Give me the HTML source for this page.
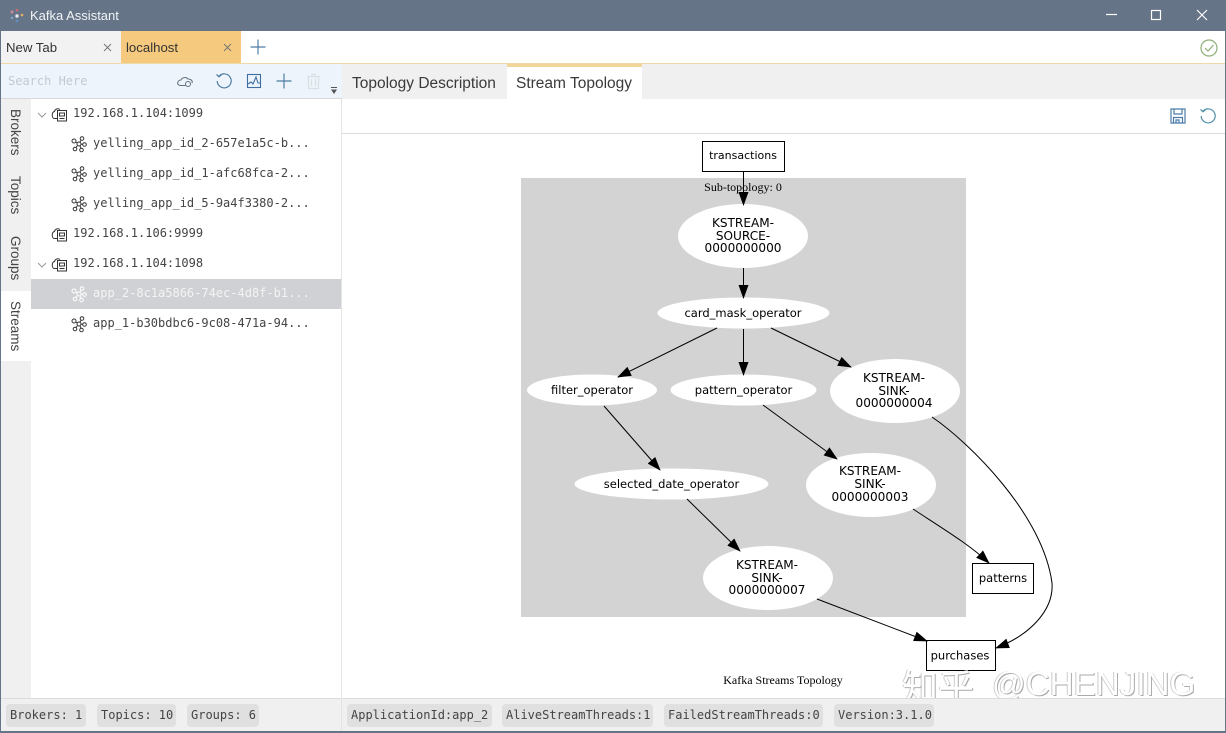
<!DOCTYPE html>
<html><head><meta charset="utf-8"><style>
*{box-sizing:border-box}
html,body{margin:0;padding:0;width:1226px;height:733px;overflow:hidden;background:#fff;font-family:"Liberation Sans","Noto Sans CJK SC",sans-serif;color:#333}
.a{position:absolute}
.m{font-family:"DejaVu Sans Mono","Liberation Mono",monospace;font-size:12px;white-space:pre;color:#444}
.row{position:absolute;left:31px;width:310px;height:30px;line-height:29px}
.vt{position:absolute;left:0;width:31px;writing-mode:vertical-rl;font-size:13.5px;color:#444;text-align:center;line-height:31px}
.chip{position:absolute;top:704px;height:23px;background:#e0e0e0;border-radius:4px;line-height:23px;padding-left:4px;font-family:"DejaVu Sans Mono","Liberation Mono",monospace;font-size:12px;color:#444;white-space:pre}
</style></head><body>
<div class="a" style="left:0;top:0;width:1226px;height:31px;background:#667487"></div>
<svg class="a" style="left:9px;top:8px" width="16" height="16"><circle cx="3" cy="4" r="1.500" fill="#c98a9a"/><circle cx="8" cy="2" r="1.300" fill="#d36a70"/><circle cx="8" cy="8" r="1.700" fill="#e8e8f0"/><circle cx="13" cy="7" r="1.300" fill="#e9b060"/><circle cx="3" cy="10" r="1.300" fill="#7fa0c8"/><circle cx="8" cy="13" r="1.500" fill="#5f8fc0"/></svg>
<div class="a" style="left:30px;top:7px;font-size:13px;line-height:17px;color:#f2f4f6">Kafka Assistant</div>
<svg class="a" style="left:1100px;top:5px" width="120" height="20" fill="none" stroke="#fff" stroke-width="1.200"><path d="M6 9.500H17"/><rect x="51.500" y="5.500" width="9" height="9"/><path d="M97 5l10 10M107 5L97 15"/></svg>

<div class="a" style="left:0;top:31px;width:121px;height:33px;background:#f2f2f2"></div>
<div class="a" style="left:6px;top:39px;font-size:13.200px;line-height:17px;color:#333">New Tab</div>
<svg class="a" style="left:102px;top:42px" width="11" height="11" stroke="#777" fill="none"><path d="M2 2l7 7M9 2l-7 7"/></svg>
<div class="a" style="left:121px;top:31px;width:120px;height:33px;background:#f5c97e"></div>
<div class="a" style="left:126px;top:39px;font-size:13.200px;line-height:17px;color:#333">localhost</div>
<svg class="a" style="left:222px;top:42px" width="11" height="11" stroke="#777" fill="none"><path d="M2 2l7 7M9 2l-7 7"/></svg>
<svg class="a" style="left:250px;top:39px" width="16" height="16" stroke="#4f7ea3" stroke-width="1.200" fill="none"><path d="M8 0.500V15.500M0.500 8H15.500"/></svg>
<svg class="a" style="left:1199px;top:38px" width="20" height="20" fill="none" stroke="#8fae78" stroke-width="1.200"><circle cx="10" cy="10" r="8"/><path d="M6 10l3 3 5.500-6"/></svg>
<div class="a" style="left:0;top:63px;width:1226px;height:1px;background:#f0d9a8"></div>

<div class="a" style="left:0;top:64px;width:342px;height:35px;background:#edf4fc;border-bottom:1px solid #d8d8d8"></div>
<div class="a m" style="left:8px;top:74px;color:#c4c9ce;line-height:15px">Search Here</div>
<svg class="a" style="left:176px;top:73px" width="20" height="16" fill="none" stroke="#63717f" stroke-width="1"><path d="M5 12.500C2 12.500 1 10.500 2 9 2.500 7.500 4 7 5 7 6 4.500 10 3.500 12 6 15 6 17 8 16 10"/><circle cx="12" cy="11" r="2.500"/><path d="M5 12.500H9.500"/></svg>
<svg class="a" style="left:214px;top:72px" width="20" height="18" fill="none" stroke="#4f7ea3" stroke-width="1.200"><path d="M5 4.200A7 7 0 1 1 3.200 9"/><path d="M2.500 2.500L5 4.800 7.500 2.500" /></svg>
<svg class="a" style="left:246px;top:73px" width="16" height="16" fill="none" stroke="#3f6f9f" stroke-width="1.100"><rect x="1.500" y="1.500" width="13" height="13"/><path d="M2 11l3-2 2 2 3-7 2 6 2 0"/></svg>
<svg class="a" style="left:276px;top:73px" width="16" height="16" stroke="#4f7ea3" stroke-width="1.200" fill="none"><path d="M8 0.500V15.500M0.500 8H15.500"/></svg>
<svg class="a" style="left:306px;top:73px" width="15" height="17" fill="none" stroke="#dcdfe2" stroke-width="1.200"><path d="M2.500 3.500h10v12h-10zM1 3.500h13M5 1.500h5M5.500 6v7M9.500 6v7"/></svg>
<svg class="a" style="left:330px;top:87px" width="8" height="8" fill="#555"><rect x="1" y="0" width="6" height="1"/><path d="M1 2.500h6L4 7z"/></svg>

<div class="a" style="left:342px;top:64px;width:884px;height:35px;background:#f0f0f0"></div>
<div class="a" style="left:507px;top:64px;width:135px;height:35px;background:#fff;border-top:3px solid #f2d598"></div>
<div class="a" style="left:352px;top:74px;font-size:15.500px;line-height:20px;color:#3a3a3a">Topology Description</div>
<div class="a" style="left:516px;top:74px;font-size:15.500px;line-height:20px;color:#3a3a3a">Stream Topology</div>
<div class="a" style="left:342px;top:133px;width:884px;height:1px;background:#dcdcdc"></div>
<svg class="a" style="left:1170px;top:108px" width="16" height="16" fill="none" stroke="#4b7cab" stroke-width="1.200"><path d="M1 1h14v14H1zM4 1v5h8V1M3.500 15V9.500h9V15M6 15v-3h3v3"/></svg>
<svg class="a" style="left:1198px;top:107px" width="20" height="18" fill="none" stroke="#4f8fa8" stroke-width="1.200"><path d="M5 4.200A7 7 0 1 1 3.200 9"/><path d="M2.500 2.500L5 4.800 7.500 2.500"/></svg>

<div class="a" style="left:0;top:99px;width:31px;height:599px;background:#f0f0f0"></div>
<div class="a" style="left:0;top:291px;width:31px;height:70px;background:#fff"></div>
<div class="vt" style="top:109px">Brokers</div>
<div class="vt" style="top:176px">Topics</div>
<div class="vt" style="top:236px">Groups</div>
<div class="vt" style="top:301px">Streams</div>
<div class="a" style="left:341px;top:99px;width:1px;height:599px;background:#e4e4e4"></div>

<div class="row" style="top:279px;background:#cfd1d4"></div>

<svg width="0" height="0" style="position:absolute"><defs>
<g id="srv" fill="none" stroke="#333" stroke-width="1"><path d="M7 12.500H3.500C0.500 12.500 0.500 6 3.500 5.500 4 3 7 2 9 3.500"/><rect x="6.500" y="4.500" width="9" height="10.500" fill="#fff"/><path d="M8.500 7h5v3h-5zM8.500 12.500h5"/></g>
<g id="app" fill="none" stroke="#333" stroke-width="1"><circle cx="8" cy="8" r="2"/><circle cx="3" cy="5" r="2"/><circle cx="4" cy="13" r="1.800"/><circle cx="11" cy="2.500" r="1.800"/><circle cx="13.500" cy="8.500" r="1.800"/><circle cx="10.500" cy="14" r="1.800"/><path d="M5 6l1.500 1M6.500 9.500L5 11.500M9 6l1.200-2M10 8.200h1.700M9 10l1 2.200"/></g>
<g id="appw" fill="none" stroke="#fff" stroke-width="1"><circle cx="8" cy="8" r="2"/><circle cx="3" cy="5" r="2"/><circle cx="4" cy="13" r="1.800"/><circle cx="11" cy="2.500" r="1.800"/><circle cx="13.500" cy="8.500" r="1.800"/><circle cx="10.500" cy="14" r="1.800"/><path d="M5 6l1.500 1M6.500 9.500L5 11.500M9 6l1.200-2M10 8.200h1.700M9 10l1 2.200"/></g>
</defs></svg>
<svg class="a" style="left:35px;top:108px" width="14" height="14" fill="none" stroke="#999"><path d="M3 5l4 4 4-4"/></svg>
<svg class="a" style="left:35px;top:258px" width="14" height="14" fill="none" stroke="#999"><path d="M3 5l4 4 4-4"/></svg>
<svg class="a" style="left:51px;top:106px" width="17" height="17"><use href="#srv"/></svg>
<svg class="a" style="left:51px;top:226px" width="17" height="17"><use href="#srv"/></svg>
<svg class="a" style="left:51px;top:256px" width="17" height="17"><use href="#srv"/></svg>
<svg class="a" style="left:71px;top:136px" width="17" height="17"><use href="#app"/></svg>
<svg class="a" style="left:71px;top:166px" width="17" height="17"><use href="#app"/></svg>
<svg class="a" style="left:71px;top:196px" width="17" height="17"><use href="#app"/></svg>
<svg class="a" style="left:71px;top:286px" width="17" height="17"><use href="#appw"/></svg>
<svg class="a" style="left:71px;top:316px" width="17" height="17"><use href="#app"/></svg>

<div class="a m" style="left:73px;top:105px;line-height:16px">192.168.1.104:1099</div>
<div class="a m" style="left:93px;top:135px;line-height:16px">yelling_app_id_2-657e1a5c-b...</div>
<div class="a m" style="left:93px;top:165px;line-height:16px">yelling_app_id_1-afc68fca-2...</div>
<div class="a m" style="left:93px;top:195px;line-height:16px">yelling_app_id_5-9a4f3380-2...</div>
<div class="a m" style="left:73px;top:225px;line-height:16px">192.168.1.106:9999</div>
<div class="a m" style="left:73px;top:255px;line-height:16px">192.168.1.104:1098</div>
<div class="a m" style="left:93px;top:285px;line-height:16px;color:#f4f4f4">app_2-8c1a5866-74ec-4d8f-b1...</div>
<div class="a m" style="left:93px;top:315px;line-height:16px">app_1-b30bdbc6-9c08-471a-94...</div>

<svg class="a" style="left:342px;top:134px" width="884" height="564" viewBox="342 134 884 564">
<defs><marker id="h" markerWidth="14" markerHeight="10" refX="13" refY="5" orient="auto" markerUnits="userSpaceOnUse"><path d="M0 0L14 5 0 10z" fill="#000"/></marker></defs>
<rect x="521" y="178" width="445" height="439" fill="#d3d3d3"/>
<g fill="#fff">
<ellipse cx="743" cy="236" rx="65" ry="32"/>
<ellipse cx="743.500" cy="313" rx="86" ry="15.500"/>
<ellipse cx="592" cy="390" rx="65" ry="15.500"/>
<ellipse cx="743.500" cy="390" rx="73" ry="15.500"/>
<ellipse cx="895" cy="391" rx="65" ry="32"/>
<ellipse cx="671.500" cy="484" rx="97" ry="15.500"/>
<ellipse cx="871" cy="485" rx="65" ry="32"/>
<ellipse cx="768" cy="578" rx="65" ry="32"/>
</g>
<g fill="#fff" stroke="#000" stroke-width="1">
<rect x="702.500" y="141.500" width="82" height="30"/>
<rect x="972.500" y="563.500" width="61" height="30"/>
<rect x="926.500" y="640.500" width="69" height="30"/>
</g>
<g fill="none" stroke="#000" stroke-width="1">
<path d="M743.500 172V205" marker-end="url(#h)"/>
<path d="M743.500 268V298" marker-end="url(#h)"/>
<path d="M717 328L618 377" marker-end="url(#h)"/>
<path d="M743.500 329V375" marker-end="url(#h)"/>
<path d="M771 328L851 367" marker-end="url(#h)"/>
<path d="M604 406L660 470" marker-end="url(#h)"/>
<path d="M763 405L837 459" marker-end="url(#h)"/>
<path d="M687 499L740 551" marker-end="url(#h)"/>
<path d="M913 509C945 530 970 545 989 563" marker-end="url(#h)"/>
<path d="M817 599L927 641" marker-end="url(#h)"/>
<path d="M932 417C970 443 1043 515 1052 583 1054 610 1030 635 996 648" marker-end="url(#h)"/>
</g>
<g font-family="'DejaVu Sans',sans-serif" font-size="11.500" fill="#000" text-anchor="middle">
<text x="743" y="159" font-size="11">transactions</text>
<g font-size="12.100">
<text x="743" y="227">KSTREAM-</text><text x="743" y="240">SOURCE-</text><text x="743" y="252">0000000000</text>
<text x="894" y="382">KSTREAM-</text><text x="894" y="395">SINK-</text><text x="894" y="407">0000000004</text>
<text x="870" y="475">KSTREAM-</text><text x="870" y="488">SINK-</text><text x="870" y="501">0000000003</text>
<text x="767" y="569">KSTREAM-</text><text x="767" y="582">SINK-</text><text x="767" y="594">0000000007</text>
</g>
<text x="743" y="317">card_mask_operator</text>
<text x="592" y="394">filter_operator</text>
<text x="743.500" y="394">pattern_operator</text>
<text x="671.500" y="488">selected_date_operator</text>
<text x="1003" y="582">patterns</text>
<text x="960" y="659.500">purchases</text>
</g>
<g font-family="'Liberation Serif',serif" font-size="12" fill="#000" text-anchor="middle">
<text x="743" y="191">Sub-topology: 0</text>
<text x="783" y="684">Kafka Streams Topology</text>
</g>
</svg>

<div class="a" style="left:902px;top:664px;font-size:36px;line-height:42px;color:#fff;font-family:'Noto Sans CJK SC',sans-serif;white-space:pre;text-shadow:1px 1px 0 #aaa,-1px 0 0 #ccc">知乎</div>
<div class="a" style="left:992px;top:664px;font-size:33.200px;line-height:42px;color:#fff;font-family:'Liberation Sans',sans-serif;white-space:pre;text-shadow:1px 1px 0 #aaa,-1px 0 0 #ccc">@CHENJING</div>

<div class="a" style="left:0;top:698px;width:1226px;height:35px;background:#f0f0f0;border-top:1px solid #dcdcdc;border-bottom:2px solid #667487"></div>
<div class="a" style="left:341px;top:698px;width:1px;height:33px;background:#e4e4e4"></div>
<div class="chip" style="left:6px;width:80px">Brokers: 1</div>
<div class="chip" style="left:97px;width:79px">Topics: 10</div>
<div class="chip" style="left:187px;width:72px">Groups: 6</div>
<div class="chip" style="left:347px;width:145px">ApplicationId:app_2</div>
<div class="chip" style="left:502px;width:151px">AliveStreamThreads:1</div>
<div class="chip" style="left:664px;width:159px">FailedStreamThreads:0</div>
<div class="chip" style="left:834px;width:100px">Version:3.1.0</div>
<div class="a" style="left:0;top:31px;width:1px;height:702px;background:#667487"></div>
<div class="a" style="left:1225px;top:31px;width:1px;height:702px;background:#667487"></div>
</body></html>
